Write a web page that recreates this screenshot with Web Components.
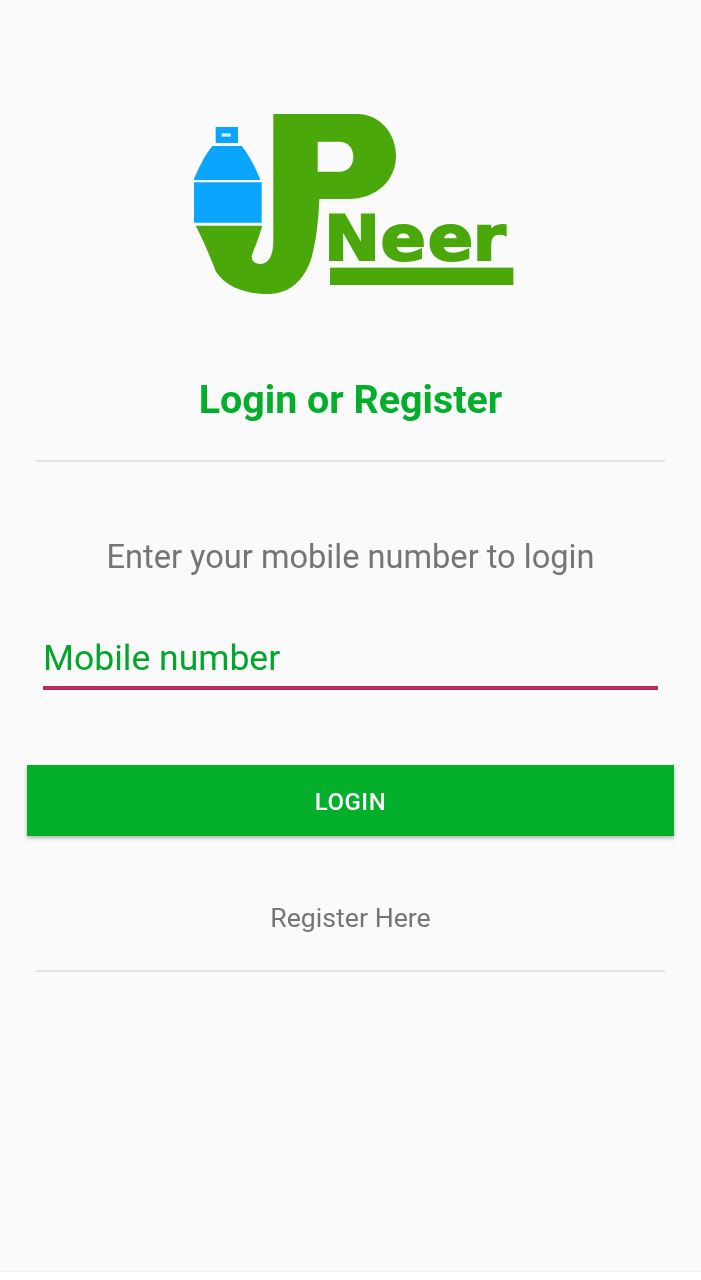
<!DOCTYPE html>
<html>
<head>
<meta charset="utf-8">
<title>Neer</title>
<style>
  html, body { margin: 0; background: #fff; }
  body { font-family: Roboto, "Liberation Sans", sans-serif; }
</style>
</head>
<body>
<login-screen>
  <neer-logo></neer-logo>
  <login-form heading="Login or Register" prompt="Enter your mobile number to login" placeholder="Mobile number" action="LOGIN" link="Register Here"></login-form>
</login-screen>

<script>
class LoginScreen extends HTMLElement {
  constructor() {
    super()
    this.attachShadow({ mode: 'open' })
    this.shadowRoot.innerHTML = `
      <style>
        :host {
          display: block;
          height: 1272px;
          background: #fafafa;
          border-bottom: 1px solid #efefef;
          padding-top: 100px;
          box-sizing: border-box;
        }
      </style>
      <slot></slot>
    `
  }
}

class NeerLogo extends HTMLElement {
  constructor() {
    super()
    this.attachShadow({ mode: 'open' })
    this.shadowRoot.innerHTML = `
      <style>
        :host { display: block; height: 205px; padding-left: 180px; }
        svg { display: block; width: 345px; height: 205px; filter: blur(.4px); }
        text { font-family: "DejaVu Sans", sans-serif; font-weight: 700; }
      </style>
      <svg viewBox="0 0 1035 615">
        <path fill="#4aa80a" fill-rule="evenodd" d="M280 42H530C600 42 648 100 648 168C648 240 590 297 505 297H418C416 350 410 410 400 450C385 530 335 582 265 582C205 582 140 565 108 515C90 470 70 420 47 377H247C238 410 225 440 216 465C212 482 225 492 240 492C265 492 279 470 280 425ZM413 125V215H478C505 215 520 195 520 170C520 145 505 125 478 125Z"/>
        <path fill="#0aa5ff" d="M107 81H174V129H107ZM97 138H185Q212 170 240 236V240H42V236Q70 170 97 138ZM42 247H245V368H42Z"/>
        <rect x="125" y="100" width="27" height="10" fill="#d8eefc"/>
        <text transform="scale(1.08 1)" x="400 557 688 813" y="479" font-size="186" fill="#4aa80a" stroke="#4aa80a" stroke-width="6">Neer</text>
        <rect x="450" y="503" width="550" height="52" fill="#4aa80a"/>
      </svg>
    `
  }
}

class LoginForm extends HTMLElement {
  constructor() {
    super()
    this.attachShadow({ mode: 'open' })
  }

  connectedCallback() {
    this.render()
  }

  render() {
    this.shadowRoot.innerHTML = `
      <style>
        :host { display: block; text-align: center; font-family: Roboto, sans-serif; transform: translateZ(0); }
        h1 {
          margin: 0;
          padding-top: 70px;
          font-size: 39.4px;
          line-height: 50px;
          font-weight: 700;
          color: #03ae2a;
        }
        hr {
          margin: 0 36px;
          border: 0;
          height: 2px;
          background: #e2e2e2;
        }
        .top { margin-top: 35px; }
        .prompt {
          margin-top: 75px;
          font-size: 32.6px;
          line-height: 40px;
          color: #757575;
        }
        .field {
          margin: 61px 43px 0;
          height: 52px;
          box-sizing: border-box;
          border-bottom: 4px solid #be2a5c;
          text-align: left;
          font-size: 35.5px;
          line-height: 40px;
          color: #03a62b;
        }
        button {
          display: block;
          box-sizing: border-box;
          width: 647px;
          height: 71px;
          margin: 75px 0 0 27px;
          border: 0;
          padding: 2px 0 0;
          background: #03ae2a;
          color: #fff;
          font: 500 24px Roboto, sans-serif;
          letter-spacing: .5px;
          box-shadow: 0 2px 4px rgba(0,0,0,.3);
        }
        .link {
          margin-top: 65px;
          font-size: 26.7px;
          line-height: 34px;
          color: #757575;
        }
        .bottom { margin-top: 35px; }
      </style>
      <h1>${this.getAttribute('heading')}</h1>
      <hr class="top">
      <div class="prompt">${this.getAttribute('prompt')}</div>
      <div class="field">${this.getAttribute('placeholder')}</div>
      <button>${this.getAttribute('action')}</button>
      <div class="link">${this.getAttribute('link')}</div>
      <hr class="bottom">
    `
  }
}

customElements.define('login-screen', LoginScreen)
customElements.define('neer-logo', NeerLogo)
customElements.define('login-form', LoginForm)
</script>
</body>
</html>
